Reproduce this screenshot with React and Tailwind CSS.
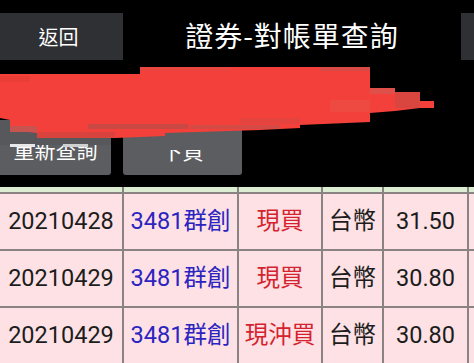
import React from "react";

const rows = [
  { date: "20210428", code: "3481群創", type: "現買", cur: "台幣", price: "31.50" },
  { date: "20210429", code: "3481群創", type: "現買", cur: "台幣", price: "30.80" },
  { date: "20210429", code: "3481群創", type: "現沖買", cur: "台幣", price: "30.80" },
];

const font = { fontFamily: "Roboto, 'Noto Sans CJK TC', sans-serif" };

export default function App() {
  return (
    <div className="relative w-[474px] h-[363px] overflow-hidden bg-black" style={font}>
      {/* top bar */}
      <div className="pt-[13px] flex items-stretch h-[60px]">
        <div className="w-[123px] bg-[#2e3033] flex items-center justify-center pr-[6px] text-[20px] text-white font-['Noto_Sans_CJK_TC',sans-serif]">
          返回
        </div>
        <div className="flex-1 flex items-center justify-center text-white text-[28px] tracking-[1px] font-['Noto_Sans_CJK_TC',sans-serif] -mt-[4px]">
          證券-對帳單查詢
        </div>
        <div className="w-[13px] bg-[#2e3033]" />
      </div>

      {/* second row buttons */}
      <div className="mt-[60px] flex gap-[12px] h-[55px]">
        <div className="w-[111px] bg-[#5b5d60] rounded-br-[3px] flex items-center justify-center text-white text-[21px] font-['Noto_Sans_CJK_TC',sans-serif] pt-[4px]">
          重新查詢
        </div>
        <div className="w-[119px] bg-[#5b5d60] rounded-b-[3px] flex items-center justify-center text-white text-[21px] font-['Noto_Sans_CJK_TC',sans-serif] pt-[6px]">
          下頁
        </div>
      </div>

      {/* table */}
      <div className="mt-[12px] grid grid-cols-[122px_113px_82px_59px_83px_1fr] grid-rows-[5px_55px_55px_55px] gap-[2px] bg-[#8b8284]">
        {["", "", "", "", "", ""].map((_, i) => (
          <div key={"h" + i} className="bg-[#dcedd2]" />
        ))}
        {rows.map((r, i) => (
          <React.Fragment key={i}>
            <div className="bg-[#fde1e4] flex items-center justify-center text-[23.5px] text-[#1c1c1c]">{r.date}</div>
            <div className="bg-[#fde1e4] flex items-center justify-center text-[23.5px] text-[#2b24c0] whitespace-nowrap">{r.code}</div>
            <div className="bg-[#fde1e4] flex items-center justify-center text-[23.5px] text-[#d4232e] whitespace-nowrap">{r.type}</div>
            <div className="bg-[#fde1e4] flex items-center justify-center text-[23.5px] text-[#1c1c1c] whitespace-nowrap">{r.cur}</div>
            <div className="bg-[#fde1e4] flex items-center justify-center text-[23.5px] text-[#1c1c1c]">{r.price}</div>
            <div className="bg-[#fde1e4]" />
          </React.Fragment>
        ))}
      </div>

      {/* red redaction scribble overlay */}
      <svg className="absolute left-0 top-0 pointer-events-none" width="474" height="363" viewBox="0 0 474 363">
        {/* mosaic gray blocks over button tops */}
        <rect x="0" y="120" width="111" height="25" fill="#56585b" />
        <rect x="123" y="120" width="119" height="30" fill="#5b5d60" />
        <rect x="143" y="123" width="50" height="7" fill="#4b4d50" />
        <rect x="10" y="144" width="25" height="3" fill="#e8e8e8" />
        <rect x="63" y="144" width="25" height="3" fill="#cfcfcf" />
        <path
          d="M0,74 L140,74 L140,67 L370,67 L370,88 L395,88 L395,92 L420,92 L420,101 L434,101 L434,108 L420,108 L395,111 L370,113 L370,122 L300,125 L300,128 L260,130 L165,133 L165,136 L115,138 L37,138 L37,133 L10,130 L10,120 L0,118 Z"
          fill="#f3403a"
        />
        <rect x="140" y="67" width="90" height="4" fill="#e8463f" />
        <rect x="320" y="67" width="50" height="4" fill="#d84a44" />
        <rect x="370" y="88" width="25" height="6" fill="#e0504a" />
        <rect x="395" y="92" width="25" height="16" fill="#d94640" />
        <rect x="88" y="124" width="100" height="5" fill="#c94843" />
        <rect x="190" y="125" width="90" height="4" fill="#d44b45" />
        <rect x="10" y="126" width="27" height="6" fill="#c85450" />
        <rect x="37" y="132" width="78" height="6" fill="#d9433d" />
        <rect x="240" y="118" width="60" height="6" fill="#e5443e" />
        <rect x="0" y="76" width="30" height="6" fill="#ea3d36" />
        <rect x="330" y="100" width="40" height="12" fill="#ee4a42" />
      </svg>
    </div>
  );
}
